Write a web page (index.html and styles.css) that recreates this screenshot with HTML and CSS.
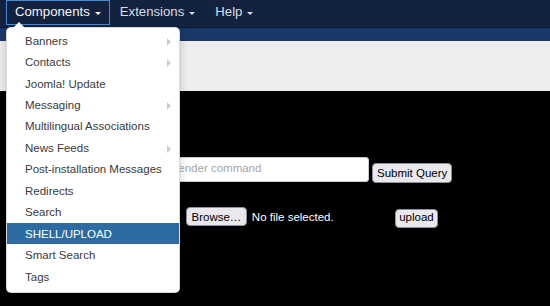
FILE: index.html
```html
<!DOCTYPE html>
<html>
<head>
<meta charset="utf-8">
<link rel="stylesheet" href="styles.css">
</head>
<body>
<header class="navbar">
  <ul class="nav">
    <li class="nav-item open">
      <a class="nav-link">Components<span class="caret"></span></a>
      <ul class="dropdown">
        <li class="dd-item has-sub"><a>Banners</a></li>
        <li class="dd-item has-sub"><a>Contacts</a></li>
        <li class="dd-item"><a>Joomla! Update</a></li>
        <li class="dd-item has-sub"><a>Messaging</a></li>
        <li class="dd-item"><a>Multilingual Associations</a></li>
        <li class="dd-item has-sub"><a>News Feeds</a></li>
        <li class="dd-item"><a>Post-installation Messages</a></li>
        <li class="dd-item"><a>Redirects</a></li>
        <li class="dd-item"><a>Search</a></li>
        <li class="dd-item active"><a>SHELL/UPLOAD</a></li>
        <li class="dd-item"><a>Smart Search</a></li>
        <li class="dd-item"><a>Tags</a></li>
      </ul>
    </li>
    <li class="nav-item"><a class="nav-link">Extensions<span class="caret"></span></a></li>
    <li class="nav-item"><a class="nav-link">Help<span class="caret"></span></a></li>
  </ul>
</header>
<div class="subhead"></div>
<div class="toolbar"></div>
<main class="console">
  <form class="cmd-row">
    <input class="cmd-input" type="text" placeholder="Render command">
    <button class="btn btn-submit" type="button">Submit Query</button>
  </form>
  <form class="upload-row">
    <span class="btn btn-browse">Browse…</span>
    <span class="file-label">No file selected.</span>
    <button class="btn btn-upload" type="button">upload</button>
  </form>
</main>
</body>
</html>
```

FILE: styles.css
```css
* { box-sizing: border-box; }
html, body { margin: 0; padding: 0; }
body {
  width: 550px;
  height: 306px;
  overflow: hidden;
  background: #000;
  font-family: "Liberation Sans", Arial, sans-serif;
}

.navbar {
  height: 27px;
  background: #13233f;
  border-bottom: 1px solid #0a182f;
  box-sizing: content-box;
}
.nav {
  list-style: none;
  margin: 0;
  padding: 0 0 0 6px;
  display: flex;
}
.nav-item { position: relative; }
.nav-link {
  display: flex;
  align-items: center;
  height: 25px;
  padding: 0 9px 2px;
  font-size: 13.2px;
  color: #d9dee6;
  border: 1px solid transparent;
}
.nav-item.open .nav-link {
  color: #f4f6f9;
  border-color: #4a8ad0;
  padding: 0 8px 2px 8px;
}
.caret {
  display: inline-block;
  margin-left: 5px;
  margin-top: 4px;
  border-top: 3px solid currentColor;
  border-left: 3px solid transparent;
  border-right: 3px solid transparent;
}

.dropdown {
  position: absolute;
  top: 27px;
  left: 0;
  z-index: 10;
  width: 174px;
  margin: 0;
  padding: 2px 0 5px;
  list-style: none;
  background: #fff;
  border: 1px solid rgba(0,0,0,0.15);
  border-radius: 5px;
  box-shadow: 0 5px 10px rgba(0,0,0,0.2);
}
.dropdown::before {
  content: "";
  position: absolute;
  top: -6px;
  left: 6px;
  border-bottom: 6px solid #fff;
  border-left: 6px solid transparent;
  border-right: 6px solid transparent;
}
.dd-item { position: relative; }
.dd-item a {
  display: block;
  padding: 2.72px 18px;
  line-height: 16px;
  font-size: 11.5px;
  color: #3a3a3a;
  white-space: nowrap;
}
.dd-item.has-sub a::after {
  content: "";
  position: absolute;
  right: 8px;
  top: 8px;
  border-left: 4px solid #ccc;
  border-top: 4px solid transparent;
  border-bottom: 4px solid transparent;
}
.dd-item.active a {
  background: #2d6ca2;
  color: #fff;
}

.subhead {
  height: 13px;
  background: #193769;
}
.toolbar {
  height: 50px;
  background: #eeeeee;
}

.console {
  padding-top: 66px;
}
.cmd-row {
  display: flex;
  align-items: flex-end;
  gap: 3px;
  margin: 0;
  padding-left: 163px;
}
.cmd-input {
  width: 206px;
  height: 25px;
  margin: 0 0 1px 0;
  padding: 2px 6px 6px;
  border: 1px solid #cccccc;
  border-radius: 3px;
  background: #fff;
  font-family: "Liberation Sans", Arial, sans-serif;
  font-size: 11.5px;
  color: #555;
  outline: none;
}
.cmd-input::placeholder { color: #a6a6a6; }

.btn {
  display: inline-block;
  font-family: "Liberation Sans", Arial, sans-serif;
  font-size: 11.5px;
  line-height: 13.2px;
  color: #000;
  background: #e9e9ed;
  border: 1px solid #8f8f9d;
  border-radius: 4px;
  margin: 0;
}
.btn-submit {
  height: 20px;
  padding: 2.5px 4px 2.3px;
}
.upload-row {
  display: flex;
  align-items: baseline;
  margin: 24px 0 0;
  padding-left: 186px;
}
.btn-browse {
  height: 19px;
  padding: 3px 4.5px 1px;
}
.file-label {
  margin-left: 5px;
  font-size: 11.5px;
  color: #fff;
}
.btn-upload {
  height: 19px;
  padding: 1px 3.5px 3px;
  margin-left: 61px;
}
```
